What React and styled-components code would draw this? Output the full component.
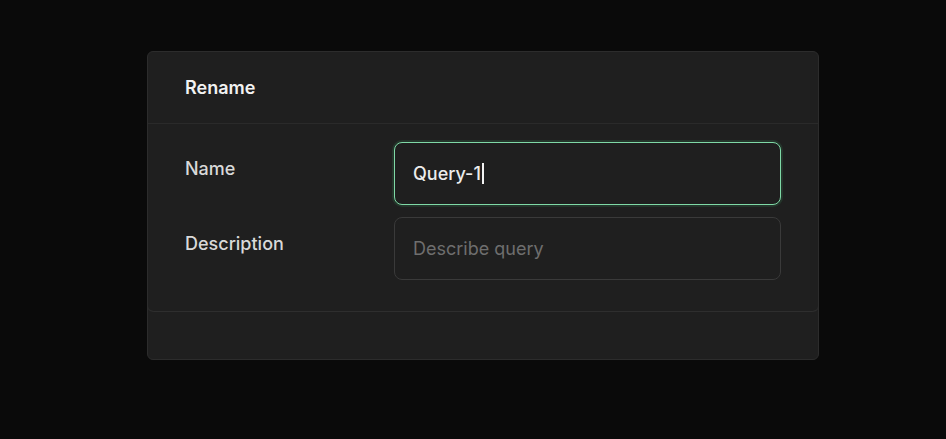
import styled, { createGlobalStyle } from "styled-components";

const Global = createGlobalStyle`
  html, body {
    margin: 0;
    background: #0a0a0a;
    font-family: Inter, "Noto Sans", sans-serif;
  }
`;

const Page = styled.div`
  min-height: 439px;
  padding: 51px 0 0 147px;
  box-sizing: border-box;
`;

const Modal = styled.div`
  width: 672px;
  background: #1f1f1f;
  border: 1px solid #2c2c2c;
  border-radius: 6px;
  box-sizing: border-box;
  overflow: hidden;
`;

const Header = styled.div`
  height: 71px;
  display: flex;
  align-items: center;
  padding: 0 37px;
  border-bottom: 1px solid #2a2a2a;
  color: #f2f2f2;
  font-size: 18px;
  font-weight: 600;
`;

const Body = styled.div`
  display: flex;
  flex-direction: column;
  gap: 12px;
  padding: 18px 37px 31px;
  border-bottom: 1px solid #2e2e2e;
  border-radius: 0 0 6px 6px;
  box-shadow: 1px 0 0 #2a2a2a, -1px 0 0 #2a2a2a;
`;

const Row = styled.div`
  display: grid;
  grid-template-columns: 209px 1fr;
  align-items: start;
`;

const Label = styled.label`
  padding-top: 16px;
  color: #d9d9d9;
  font-size: 18px;
  font-weight: 500;
`;

const Field = styled.div`
  height: 63px;
  display: flex;
  align-items: center;
  padding: 0 18px;
  box-sizing: border-box;
  background: #1f1f1f;
  border: 1px solid ${(p) => (p.$focused ? "#7fd9a6" : "#3a3a3a")};
  border-radius: 8px;
  box-shadow: ${(p) => (p.$focused ? "0 0 0 2px #24352b" : "none")};
  color: ${(p) => (p.$focused ? "#ececec" : "#6e6e6e")};
  font-size: 18px;
  font-weight: ${(p) => (p.$focused ? 500 : 400)};
`;

const Caret = styled.span`
  display: inline-block;
  width: 2px;
  height: 21px;
  margin-left: 1px;
  background: #f2f2f2;
  vertical-align: -4px;
`;

const Footer = styled.div`
  height: 47px;
`;

export default function App() {
  return (
    <>
      <Global />
      <Page>
        <Modal>
          <Header>Rename</Header>
          <Body>
            <Row>
              <Label>Name</Label>
              <Field $focused>
                <span>
                  Query-1
                  <Caret />
                </span>
              </Field>
            </Row>
            <Row>
              <Label>Description</Label>
              <Field>Describe query</Field>
            </Row>
          </Body>
          <Footer />
        </Modal>
      </Page>
    </>
  );
}
